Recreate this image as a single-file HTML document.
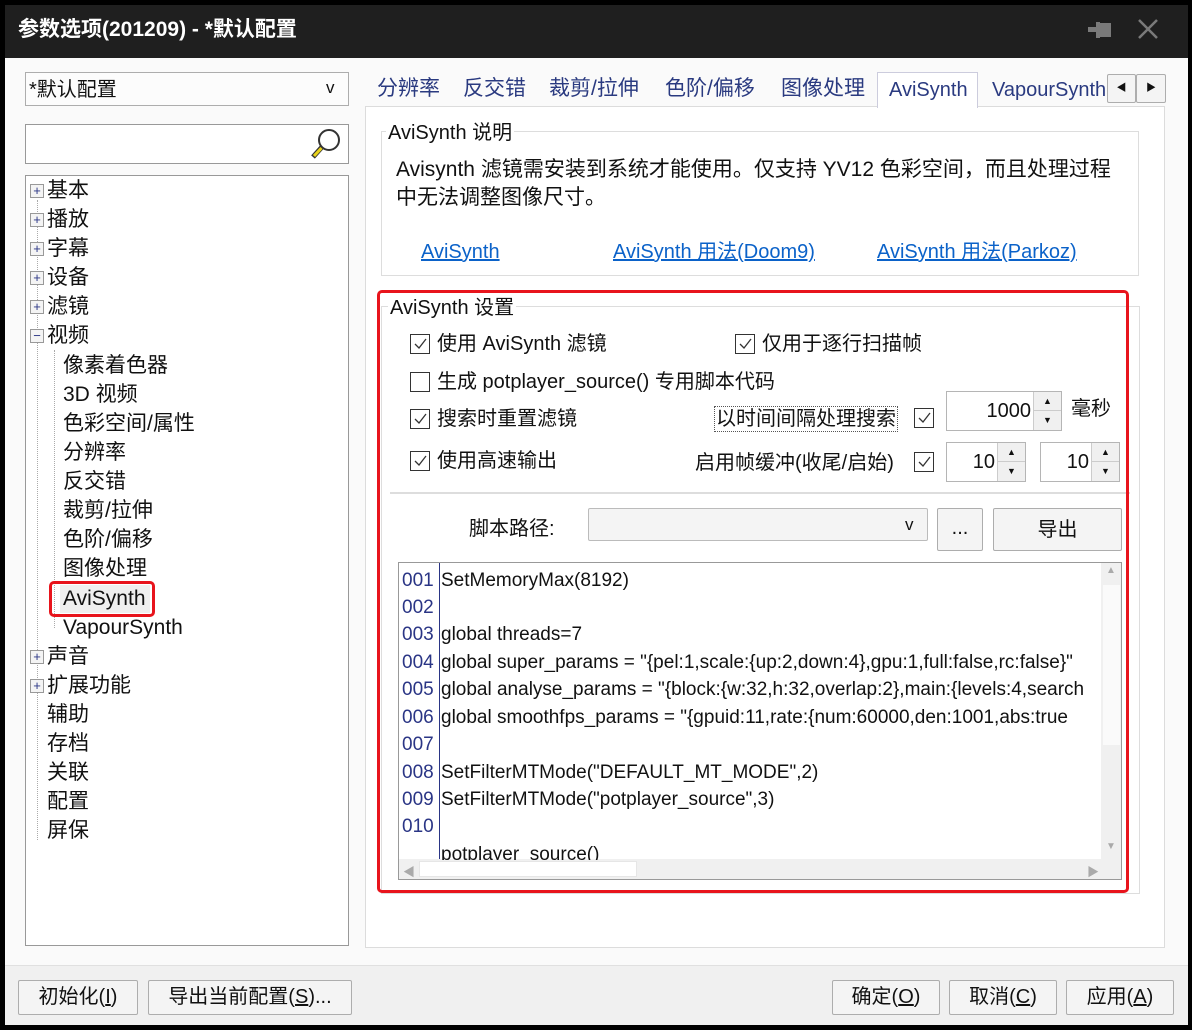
<!DOCTYPE html>
<html><head><meta charset="utf-8"><style>
*{margin:0;padding:0;box-sizing:border-box}
body{width:1192px;height:1030px;background:#000;position:relative;overflow:hidden;font-family:"Liberation Sans","Noto Sans CJK SC",sans-serif;font-size:20px;color:#111}
.a{position:absolute;white-space:nowrap;line-height:24px}
.b{position:absolute}
.cb{position:absolute;width:20px;height:20px;border:1.5px solid #333;background:#fff}
.cb svg{position:absolute;left:1px;top:1px}
.btn{position:absolute;background:#f4f4f4;border:1px solid #adadad;text-align:center;border-radius:2px}
.sp{position:absolute;background:#fff;border:1px solid #b5b5b5}
.sp .t{position:absolute;right:30px;top:7px;line-height:24px}
.sp .u,.sp .d{position:absolute;right:0;width:28px;height:50%;background:#f0f0f0;border-left:1px solid #ccc;font-size:9px;text-align:center;line-height:18px}
.sp .u{top:0;border-bottom:1px solid #ccc}.sp .d{bottom:0}
.ln{color:#2a3585}
.lk{color:#0b62c9;text-decoration:underline}
.tab{color:#2a3a80}
.pm{position:absolute;left:30px;width:14px;height:14px;border:1px solid #999;background:#f4f4f4;font-size:13px;line-height:11px;text-align:center;color:#2a3585}
</style></head><body>
<div class="b" style="left:5px;top:5px;width:1183px;height:53px;background:#1f1f1f"></div>
<div class="a" style="left:18px;top:18px;color:#fff;font-size:21px;font-weight:bold">参数选项(201209) - *默认配置</div>
<svg class="b" style="left:1088px;top:18px" width="26" height="24"><rect x="0" y="9" width="8" height="5" fill="#7a7a7a"/><rect x="8" y="4" width="4" height="16" fill="#7a7a7a"/><rect x="12" y="5" width="11" height="14" fill="#7a7a7a"/></svg>
<svg class="b" style="left:1137px;top:18px" width="22" height="22"><path d="M2 2L20 20M20 2L2 20" stroke="#7a7a7a" stroke-width="2.5"/></svg>
<div class="b" style="left:5px;top:58px;width:1183px;height:967px;background:#fafafa"></div>
<div class="b" style="left:5px;top:965px;width:1183px;height:60px;background:#f0f0f0;border-top:1px solid #e0e0e0"></div>

<div class="b" style="left:25px;top:72px;width:324px;height:34px;background:#fcfcfc;border:1px solid #adadad"></div>
<div class="a" style="left:29px;top:78px">*默认配置</div>
<div class="a" style="left:326px;top:76px;font-size:17px">v</div>
<div class="b" style="left:25px;top:124px;width:324px;height:40px;background:#fff;border:1px solid #999"></div>
<svg class="b" style="left:308px;top:126px" width="36" height="36"><circle cx="21" cy="14" r="10" fill="#fff" stroke="#333" stroke-width="2"/><path d="M14 21L5 31" stroke="#333" stroke-width="5"/><path d="M13.5 22L6 30" stroke="#e8d21a" stroke-width="3"/></svg>
<div class="b" style="left:25px;top:175px;width:324px;height:771px;background:#fff;border:1px solid #999"></div>
<div class="b" style="left:37px;top:200px;height:640px;border-left:1px dotted #aaa"></div>
<div class="b" style="left:54px;top:350px;height:278px;border-left:1px dotted #aaa"></div>
<div class="b" style="left:49px;top:581px;width:106px;height:36px;border:3px solid #e8141c;border-radius:5px"></div>

<div class="b" style="left:365px;top:106px;width:800px;height:842px;background:#fff;border:1px solid #dcdcdc"></div>
<div class="b" style="left:877px;top:72px;width:101px;height:36px;background:#fff;border:1px solid #ccd;border-bottom:none"></div>
<div class="a tab" style="left:377px;top:77px;font-size:21px">分辨率</div>
<div class="a tab" style="left:463px;top:77px;font-size:21px">反交错</div>
<div class="a tab" style="left:549px;top:77px;font-size:21px">裁剪/拉伸</div>
<div class="a tab" style="left:665px;top:77px;font-size:21px">色阶/偏移</div>
<div class="a tab" style="left:781px;top:77px;font-size:21px">图像处理</div>
<div class="a tab" style="left:889px;top:78px">AviSynth</div>
<div class="a tab" style="left:992px;top:78px;width:114px;overflow:hidden">VapourSynth</div>
<div class="btn" style="left:1107px;top:74px;width:29px;height:29px;font-size:10px;line-height:27px">◀</div>
<div class="btn" style="left:1136px;top:74px;width:30px;height:29px;font-size:10px;line-height:27px">▶</div>

<div class="b" style="left:381px;top:131px;width:758px;height:145px;border:1px solid #ddd"></div>
<div class="a" style="left:386px;top:121px;background:#fff;padding:0 2px">AviSynth 说明</div>
<div class="a" style="left:396px;top:158px;font-size:21px">Avisynth 滤镜需安装到系统才能使用。仅支持 YV12 色彩空间，而且处理过程</div>
<div class="a" style="left:396px;top:186px;font-size:21px">中无法调整图像尺寸。</div>
<div class="a lk" style="left:421px;top:240px">AviSynth</div>
<div class="a lk" style="left:613px;top:240px">AviSynth 用法(Doom9)</div>
<div class="a lk" style="left:877px;top:240px">AviSynth 用法(Parkoz)</div>

<div class="b" style="left:381px;top:306px;width:759px;height:588px;border:1px solid #ddd"></div>
<div class="a" style="left:388px;top:296px;background:#fff;padding:0 2px">AviSynth 设置</div>
<div class="cb" style="left:410px;top:334px"><svg width="16" height="16"><path d="M3 8L7 12L14 3" stroke="#333" stroke-width="1.3" fill="none"/></svg></div>
<div class="a" style="left:437px;top:332px">使用 AviSynth 滤镜</div>
<div class="cb" style="left:735px;top:334px"><svg width="16" height="16"><path d="M3 8L7 12L14 3" stroke="#333" stroke-width="1.3" fill="none"/></svg></div>
<div class="a" style="left:762px;top:332px">仅用于逐行扫描帧</div>
<div class="cb" style="left:410px;top:372px"></div>
<div class="a" style="left:437px;top:370px">生成 potplayer_source() 专用脚本代码</div>
<div class="cb" style="left:410px;top:409px"><svg width="16" height="16"><path d="M3 8L7 12L14 3" stroke="#333" stroke-width="1.3" fill="none"/></svg></div>
<div class="a" style="left:437px;top:407px">搜索时重置滤镜</div>
<div class="a" style="left:714px;top:406px;border:1px dotted #555;padding:0 1px;line-height:24px">以时间间隔处理搜索</div>
<div class="cb" style="left:914px;top:408px"><svg width="16" height="16"><path d="M3 8L7 12L14 3" stroke="#333" stroke-width="1.3" fill="none"/></svg></div>
<div class="sp" style="left:946px;top:391px;width:116px;height:40px"><span class="t">1000</span><div class="u">▲</div><div class="d">▼</div></div>
<div class="a" style="left:1071px;top:397px">毫秒</div>
<div class="cb" style="left:410px;top:451px"><svg width="16" height="16"><path d="M3 8L7 12L14 3" stroke="#333" stroke-width="1.3" fill="none"/></svg></div>
<div class="a" style="left:437px;top:449px">使用高速输出</div>
<div class="a" style="left:695px;top:451px">启用帧缓冲(收尾/启始)</div>
<div class="cb" style="left:914px;top:452px"><svg width="16" height="16"><path d="M3 8L7 12L14 3" stroke="#333" stroke-width="1.3" fill="none"/></svg></div>
<div class="sp" style="left:946px;top:442px;width:80px;height:40px"><span class="t">10</span><div class="u">▲</div><div class="d">▼</div></div>
<div class="sp" style="left:1040px;top:442px;width:80px;height:40px"><span class="t">10</span><div class="u">▲</div><div class="d">▼</div></div>
<div class="b" style="left:390px;top:492px;width:740px;height:2px;background:#ddd"></div>

<div class="a" style="left:469px;top:517px">脚本路径:</div>
<div class="b" style="left:588px;top:508px;width:340px;height:33px;background:#f4f4f4;border:1px solid #bbb;border-radius:2px"></div>
<div class="a" style="left:905px;top:513px;font-size:17px">v</div>
<div class="btn" style="left:937px;top:508px;width:46px;height:43px;line-height:38px">...</div>
<div class="btn" style="left:993px;top:508px;width:129px;height:43px;line-height:43px">导出</div>

<div class="b" style="left:398px;top:562px;width:724px;height:318px;background:#fff;border:1px solid #999;overflow:hidden">
<div class="b" style="left:40px;top:0;width:1px;height:300px;background:#2a3585"></div>
<div class="b" style="left:0;top:296px;width:722px;height:20px;background:#f0f0f0"></div>
<div class="b" style="left:20px;top:298px;width:218px;height:16px;background:#fff;border:1px solid #e6e6e6"></div>
<div class="b" style="left:702px;top:0;width:20px;height:300px;background:#f0f0f0"></div>
<div class="b" style="left:704px;top:22px;width:17px;height:160px;background:#fafafa"></div>
<div class="b" style="left:707px;top:2px;font-size:10px;color:#aaa">▲</div>
<div class="b" style="left:707px;top:278px;font-size:10px;color:#aaa">▼</div>
<div class="b" style="left:4px;top:300px;font-size:12px;color:#aaa">◀</div>
<div class="b" style="left:688px;top:300px;font-size:12px;color:#aaa">▶</div>
</div>

<div class="b" style="left:377px;top:290px;width:752px;height:603px;border:3px solid #e8141c;border-radius:5px"></div>

<div class="btn" style="left:18px;top:980px;width:120px;height:35px;line-height:33px">初始化(<u>I</u>)</div>
<div class="btn" style="left:148px;top:980px;width:204px;height:35px;line-height:33px">导出当前配置(<u>S</u>)...</div>
<div class="btn" style="left:832px;top:980px;width:108px;height:35px;line-height:33px">确定(<u>O</u>)</div>
<div class="btn" style="left:949px;top:980px;width:108px;height:35px;line-height:33px">取消(<u>C</u>)</div>
<div class="btn" style="left:1066px;top:980px;width:108px;height:35px;line-height:33px">应用(<u>A</u>)</div>

<div class="pm" style="top:184px">+</div><div class="a" style="left:47px;top:179px;font-size:21px">基本</div>
<div class="pm" style="top:213px">+</div><div class="a" style="left:47px;top:208px;font-size:21px">播放</div>
<div class="pm" style="top:242px">+</div><div class="a" style="left:47px;top:237px;font-size:21px">字幕</div>
<div class="pm" style="top:271px">+</div><div class="a" style="left:47px;top:266px;font-size:21px">设备</div>
<div class="pm" style="top:300px">+</div><div class="a" style="left:47px;top:295px;font-size:21px">滤镜</div>
<div class="pm" style="top:329px">−</div><div class="a" style="left:47px;top:324px;font-size:21px">视频</div>
<div class="a" style="left:63px;top:354px;font-size:21px">像素着色器</div>
<div class="a" style="left:63px;top:383px;font-size:21px">3D 视频</div>
<div class="a" style="left:63px;top:412px;font-size:21px">色彩空间/属性</div>
<div class="a" style="left:63px;top:441px;font-size:21px">分辨率</div>
<div class="a" style="left:63px;top:470px;font-size:21px">反交错</div>
<div class="a" style="left:63px;top:499px;font-size:21px">裁剪/拉伸</div>
<div class="a" style="left:63px;top:528px;font-size:21px">色阶/偏移</div>
<div class="a" style="left:63px;top:557px;font-size:21px">图像处理</div>
<div class="b" style="left:60px;top:585px;width:90px;height:28px;background:#efefef"></div>
<div class="a" style="left:63px;top:587px;font-size:21px">AviSynth</div>
<div class="a" style="left:63px;top:616px;font-size:21px">VapourSynth</div>
<div class="pm" style="top:650px">+</div><div class="a" style="left:47px;top:645px;font-size:21px">声音</div>
<div class="pm" style="top:679px">+</div><div class="a" style="left:47px;top:674px;font-size:21px">扩展功能</div>
<div class="a" style="left:47px;top:703px;font-size:21px">辅助</div>
<div class="a" style="left:47px;top:732px;font-size:21px">存档</div>
<div class="a" style="left:47px;top:761px;font-size:21px">关联</div>
<div class="a" style="left:47px;top:790px;font-size:21px">配置</div>
<div class="a" style="left:47px;top:819px;font-size:21px">屏保</div>

<div class="b" style="left:399px;top:569px;width:702px;height:291px;overflow:hidden;font-size:19px">
<div class="a" style="left:3px;top:0"><span class="ln">001</span></div><div class="a" style="left:42px;top:0">SetMemoryMax(8192)</div>
<div class="a" style="left:3px;top:27px"><span class="ln">002</span></div>
<div class="a" style="left:3px;top:54px"><span class="ln">003</span></div><div class="a" style="left:42px;top:54px">global threads=7</div>
<div class="a" style="left:3px;top:82px"><span class="ln">004</span></div><div class="a" style="left:42px;top:82px">global super_params = "{pel:1,scale:{up:2,down:4},gpu:1,full:false,rc:false}"</div>
<div class="a" style="left:3px;top:109px"><span class="ln">005</span></div><div class="a" style="left:42px;top:109px">global analyse_params = "{block:{w:32,h:32,overlap:2},main:{levels:4,search</div>
<div class="a" style="left:3px;top:137px"><span class="ln">006</span></div><div class="a" style="left:42px;top:137px">global smoothfps_params = "{gpuid:11,rate:{num:60000,den:1001,abs:true</div>
<div class="a" style="left:3px;top:164px"><span class="ln">007</span></div>
<div class="a" style="left:3px;top:192px"><span class="ln">008</span></div><div class="a" style="left:42px;top:192px">SetFilterMTMode("DEFAULT_MT_MODE",2)</div>
<div class="a" style="left:3px;top:219px"><span class="ln">009</span></div><div class="a" style="left:42px;top:219px">SetFilterMTMode("potplayer_source",3)</div>
<div class="a" style="left:3px;top:246px"><span class="ln">010</span></div>
<div class="a" style="left:42px;top:274px">potplayer_source()</div>
</div>
</body></html>
